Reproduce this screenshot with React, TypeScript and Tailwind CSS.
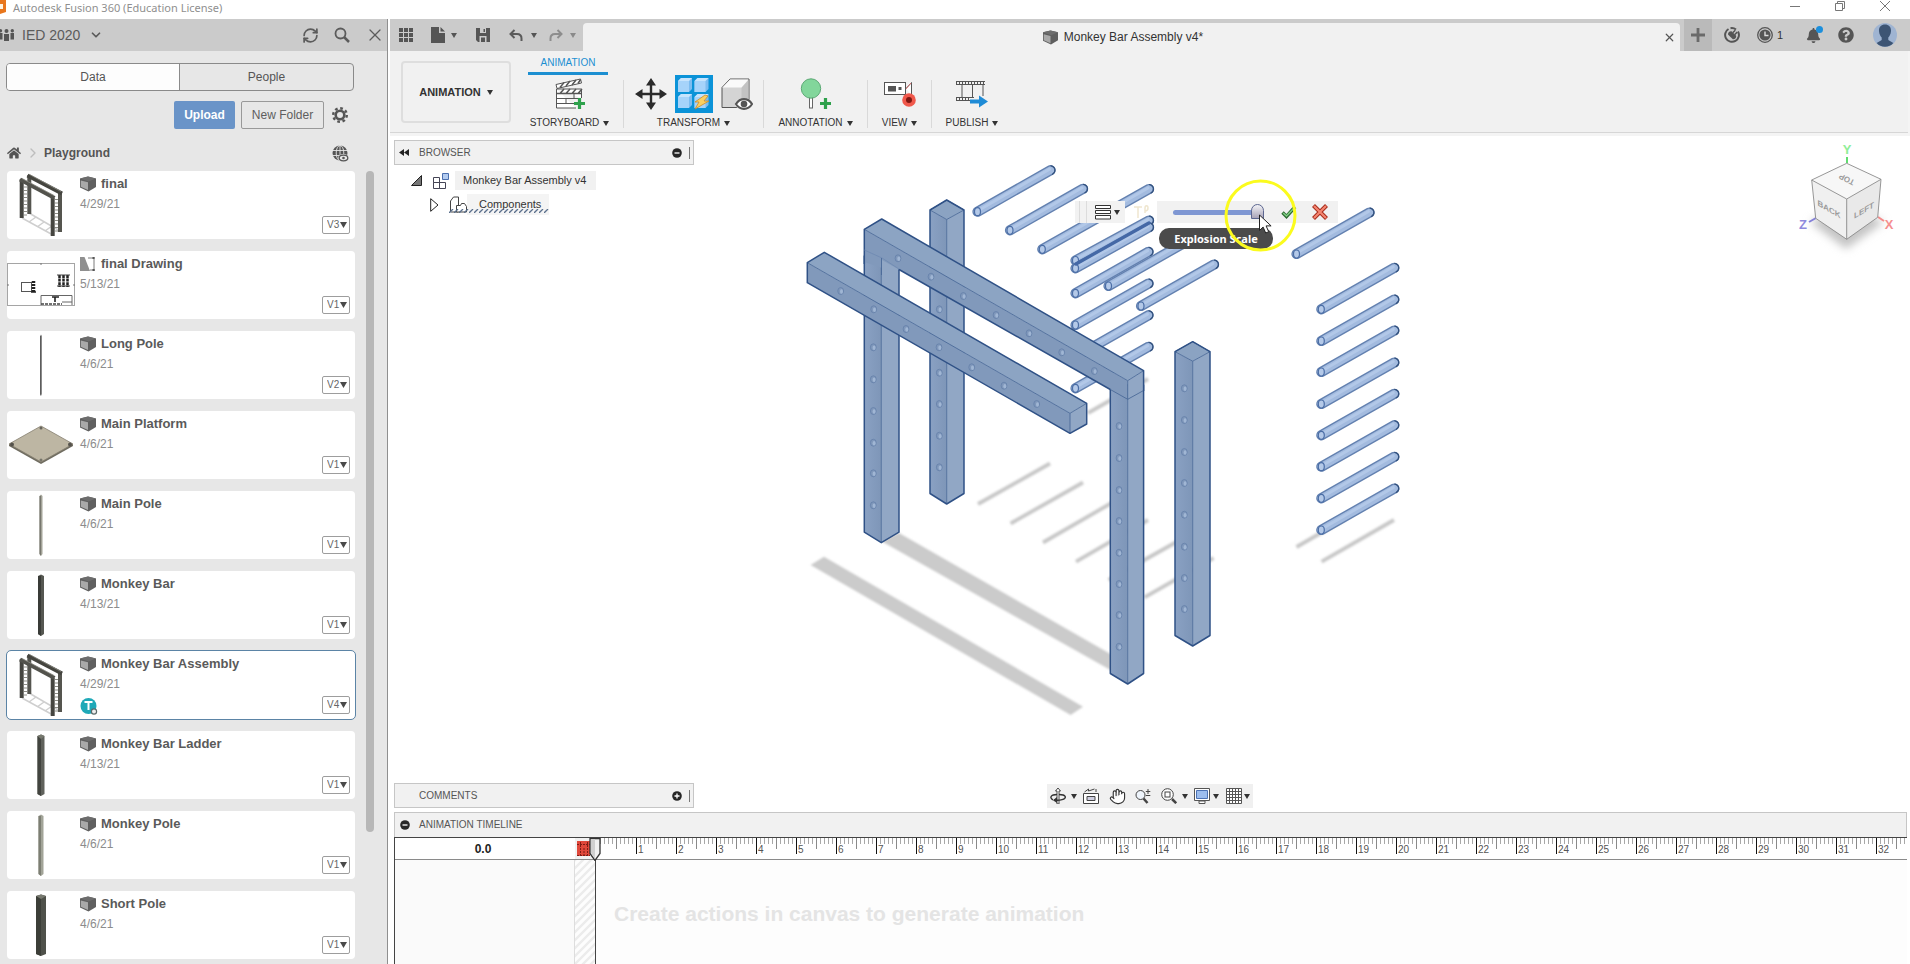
import React from "react";
import { FaHome, FaBell, FaQuestionCircle } from "react-icons/fa";
import { ChevronDown, ChevronRight, Hand, RefreshCw, X } from "lucide-react";

type Kind = "frame" | "drawing" | "pole" | "platform";
type Item = { name: string; date: string; version: string; kind: Kind; fill?: string; dark?: string; width?: number; selected?: boolean };

const items: Item[] = [
  { name: "final", date: "4/29/21", version: "V3", kind: "frame" },
  { name: "final Drawing", date: "5/13/21", version: "V1", kind: "drawing" },
  { name: "Long Pole", date: "4/6/21", version: "V2", kind: "pole", fill: "#8a8a8a", dark: "#5c5c5c", width: 2 },
  { name: "Main Platform", date: "4/6/21", version: "V1", kind: "platform" },
  { name: "Main Pole", date: "4/6/21", version: "V1", kind: "pole", fill: "#a3a398", dark: "#77776e", width: 3 },
  { name: "Monkey Bar", date: "4/13/21", version: "V1", kind: "pole", fill: "#555751", dark: "#393b37", width: 6 },
  { name: "Monkey Bar Assembly", date: "4/29/21", version: "V4", kind: "frame", selected: true },
  { name: "Monkey Bar Ladder", date: "4/13/21", version: "V1", kind: "pole", fill: "#60625c", dark: "#42443f", width: 7 },
  { name: "Monkey Pole", date: "4/6/21", version: "V1", kind: "pole", fill: "#a2a498", dark: "#7c7e73", width: 5 },
  { name: "Short Pole", date: "4/6/21", version: "V1", kind: "pole", fill: "#4f514a", dark: "#3c3e38", width: 10 },
];

function Caret({ className = "text-[#333]" }: { className?: string }) {
  return (
    <svg viewBox="0 0 6 5" className={`h-[5px] w-1.5 shrink-0 ${className}`} aria-hidden="true">
      <path d="M0 0h6L3 5z" fill="currentColor" />
    </svg>
  );
}

function CubeIcon({ className = "size-4" }: { className?: string }) {
  return (
    <svg viewBox="0 0 16 16" className={className} aria-hidden="true">
      <path d="M0 2.500 8 0.500 16 2.500V11L8.500 15.500 0 11.500z" fill="#5f5f5f" />
      <path d="M0.800 4.600 8 6.300V14L0.800 10.800z" fill="#a9a9a9" />
      <path d="M0 2.500 8 0.500 16 2.500 8.500 5.500z" fill="#6d6d6d" />
    </svg>
  );
}

function DrawingIcon() {
  return (
    <svg viewBox="0 0 16 16" className="size-4" aria-hidden="true">
      <path d="M0 1h4.500L10 15H0z" fill="#8f8f8f" />
      <path d="M8 2h6M14 1v14M10 14h5" stroke="#7a7a7a" fill="none" />
      <path d="M12.500 1h2v2h-2zM12.500 13h2v2h-2z" fill="#555" />
    </svg>
  );
}

function Thumb({ item }: { item: Item }) {
  if (item.kind === "frame")
    return (
      <svg viewBox="0 0 68 68" className="size-[68px]" aria-hidden="true">
        <path d="M15 47 46 64M22 42 53 60M22 51l7-5M30 56l7-5M38 60l7-5" stroke="#cfcfcf" strokeWidth="1.500" />
        <path d="M22.300 4V43" stroke="#55554f" strokeWidth="4" />
        <path d="M53 22V61" stroke="#55554f" strokeWidth="4" />
        <path d="M20.500 4.500 55 22.500" stroke="#45453f" strokeWidth="4" />
        <path d="M18.500 12V45M49.500 28V62" stroke="#8d8d86" strokeWidth="3" strokeDasharray="1 2.500" />
        <path d="M14.700 8V47" stroke="#454540" strokeWidth="4" />
        <path d="M45.700 27V65" stroke="#454540" strokeWidth="4" />
        <path d="M13 8.500 47.500 27" stroke="#53534d" strokeWidth="4" />
        <path d="M15 7.500 47 24.500M22 3.200 54 20.500" stroke="#8a8a81" strokeWidth="0.800" />
      </svg>
    );
  if (item.kind === "drawing")
    return (
      <svg viewBox="0 0 68 68" className="size-[68px]" aria-hidden="true">
        <rect x="0.500" y="12.500" width="67" height="42" fill="#fff" stroke="#a5a5a5" />
        <path d="M34 12v2M0 34h2M66 34h2" stroke="#777" />
        <rect x="14.500" y="31.500" width="10" height="9" fill="none" stroke="#555" />
        <path d="M26.500 30v12" stroke="#222" strokeWidth="3.500" strokeDasharray="2 1" />
        <path d="M24 41h5" stroke="#222" strokeWidth="1.500" />
        <path d="M52.500 24v12M56.500 24v12M60.500 24v12" stroke="#222" strokeWidth="2.500" strokeDasharray="3 0.600" />
        <path d="M50 24h13M50 35h13" stroke="#444" />
        <path d="M34 54V44.500h31V54" fill="none" stroke="#666" />
        <path d="M34 53h21" stroke="#444" strokeWidth="1.600" strokeDasharray="3 1" />
        <path d="M45 46h7M48 46v5" stroke="#222" strokeWidth="1.600" />
        <path d="M55 51h10" stroke="#666" />
      </svg>
    );
  if (item.kind === "platform")
    return (
      <svg viewBox="0 0 68 68" className="size-[68px]" aria-hidden="true">
        <path d="M2 33v2L34 53 66 35v-2z" fill="#6f6c60" />
        <path d="M34 15 66 33 34 51 2 33z" fill="#bdb6a3" stroke="#857f70" strokeWidth="0.800" />
        <circle cx="34" cy="17" r="1.500" fill="#66645c" />
        <circle cx="34" cy="49" r="1.500" fill="#77756a" />
        <circle cx="5" cy="33.500" r="2" fill="#55534c" />
        <circle cx="63" cy="33.500" r="2" fill="#55534c" />
      </svg>
    );
  const w = item.width ?? 4;
  return (
    <svg viewBox="0 0 68 68" className="size-[68px]" aria-hidden="true">
      <path d={`M${34 - w / 2} 5 34 3.500 ${34 + w / 2} 5V63L34 65 ${34 - w / 2} 63z`} fill={item.fill} />
      <path d={`M${34 - w / 2} 5H34V65L${34 - w / 2} 63z`} fill={item.dark} />
      {w > 6 && <path d={`M${34 - w / 2} 5 34 3.500 ${34 + w / 2} 5 34 8z`} fill="#77796f" />}
    </svg>
  );
}

function FileCard({ item }: { item: Item }) {
  return (
    <li className={`flex h-[68px] shrink-0 rounded-sm bg-white ${item.selected ? "outline outline-[#5b84a6]" : ""}`}>
      <Thumb item={item} />
      <div className="ml-[5px] flex min-w-0 flex-1 flex-col pt-1">
        <a href="#" className="flex items-center gap-[5px] text-[13px] leading-[17px] font-bold text-[#5a5a5a]">
          {item.kind === "drawing" ? <DrawingIcon /> : <CubeIcon />}
          {item.name}
        </a>
        <span className="mt-0.5 text-xs leading-5 text-[#8c8c8c]">{item.date}</span>
        {item.selected && (
          <svg viewBox="0 0 18 18" className="mt-[3px] size-[18px]" aria-label="Team hub">
            <circle cx="8.500" cy="9" r="8" fill="#1fa9b8" />
            <path d="M4.500 5h8M8.500 5v8" stroke="#fff" strokeWidth="2" />
            <circle cx="14" cy="14.500" r="2.600" fill="#eee" stroke="#5b6b6b" strokeWidth="1.200" />
          </svg>
        )}
      </div>
      <div className="relative mr-[5px] mb-[5px] flex w-7 items-center self-end rounded-xs border border-[#9d9d9d]">
        <select
          aria-label={`Version of ${item.name}`}
          className="h-4 w-full appearance-none bg-transparent pl-1 text-[10px] leading-4 text-[#666] outline-none"
        >
          <option>{item.version}</option>
        </select>
        <svg viewBox="0 0 7 6" className="pointer-events-none absolute right-0.5 h-1.5 w-[7px]" aria-hidden="true">
          <path d="M0 0h7L3.500 6z" fill="#4a4a4a" />
        </svg>
      </div>
    </li>
  );
}

function Sidebar() {
  return (
    <aside className="flex w-[388px] shrink-0 flex-col border-r border-[#8f8f8f] bg-[#e7e7e7]">
      <header className="flex h-8 shrink-0 items-center bg-[#cbcbcb] pr-0.5 text-[#5b5b5b]">
        <svg viewBox="0 0 14 14" className="h-[14px] w-[14px]" aria-hidden="true">
          <path d="M-2 5h4.500v6.500H-2zM4 6h5v7H4zM10.500 5H14v6.500h-3.500z" fill="#555" />
          <circle cx="0.500" cy="2.800" r="1.700" fill="#555" />
          <circle cx="6.500" cy="3" r="2" fill="#555" />
          <circle cx="12.300" cy="2.800" r="1.700" fill="#555" />
        </svg>
        <button className="ml-2 flex items-center gap-[9px] text-sm leading-5">
          IED 2020
          <ChevronDown size={14} strokeWidth={3} />
        </button>
        <div className="ml-auto flex items-center gap-[15px]">
          <button aria-label="Refresh"><RefreshCw size={17} strokeWidth={2.4} /></button>
          <button aria-label="Search">
            <svg viewBox="0 0 16 16" className="size-4" fill="none" stroke="currentColor">
              <circle cx="6.500" cy="6.500" r="5" strokeWidth="1.800" />
              <path d="m10 10 5 5" strokeWidth="2.500" />
            </svg>
          </button>
          <button aria-label="Close data panel"><X size={20} strokeWidth={1.5} /></button>
        </div>
      </header>

      <div className="mt-3 mr-[33px] ml-1.5 grid h-7 shrink-0 grid-cols-2 overflow-hidden rounded-sm border border-[#8a8a8a] text-xs text-[#555]">
        <button className="border-r border-[#8a8a8a] bg-[#fdfdfd]">Data</button>
        <button>People</button>
      </div>

      <div className="mt-[10px] mr-[39px] flex h-7 shrink-0 items-center justify-end text-xs">
        <button className="h-7 w-[61px] rounded-xs bg-[#6a94c8] font-bold text-white">Upload</button>
        <button className="ml-1.5 h-7 w-[83px] rounded-xs border border-[#999] text-[#5e5e5e]">New Folder</button>
        <button aria-label="Settings" className="ml-2 text-[#555]">
          <svg viewBox="0 0 16 16" className="size-4" fill="none" stroke="#555">
            <circle cx="8" cy="8" r="6.800" strokeWidth="2.400" strokeDasharray="2.700 2.640" />
            <circle cx="8" cy="8" r="4.300" strokeWidth="2.600" />
          </svg>
        </button>
      </div>

      <nav className="mt-[14px] mr-[38px] ml-[7px] flex h-5 shrink-0 items-center text-[#555]">
        <a href="#" aria-label="Home"><FaHome size={14} /></a>
        <ChevronRight size={16} strokeWidth={2} className="ml-1 text-[#bdbdbd]" />
        <a href="#" className="ml-[3px] text-xs leading-4 font-bold">Playground</a>
        <button aria-label="Open on the web" className="ml-auto">
          <svg viewBox="0 0 17 17" className="size-[17px]" aria-hidden="true">
            <circle cx="8" cy="8" r="7.500" fill="#555" />
            <path d="M0 5.500h16M0 10.500h16M8 0v16" stroke="#e7e7e7" strokeWidth="0.900" />
            <ellipse cx="8" cy="8" rx="3.800" ry="7.500" fill="none" stroke="#e7e7e7" strokeWidth="0.900" />
            <ellipse cx="11.500" cy="13" rx="5.500" ry="4" fill="#e7e7e7" />
            <ellipse cx="11.500" cy="13" rx="4.300" ry="2.800" fill="none" stroke="#555" strokeWidth="1.300" />
            <circle cx="11.500" cy="13" r="1.300" fill="#555" />
          </svg>
        </button>
      </nav>

      <div className="mt-2 flex min-h-0 flex-1 pl-[7px]">
        <ul className="-ml-1 flex min-h-0 flex-1 flex-col gap-3 overflow-hidden pt-0 pr-1 pl-1">
          {items.map((item) => (
            <FileCard key={item.name} item={item} />
          ))}
        </ul>
        <div className="mr-[13px] ml-[7px] w-2 shrink-0">
          <div className="h-5/6 w-2 rounded-full bg-[#b7b7b7]" />
        </div>
      </div>
    </aside>
  );
}

function QuickBar() {
  return (
    <div className="flex h-8 shrink-0 bg-[#cbcbcb] pr-0.5">
      <div className="flex w-[193px] shrink-0 items-center pl-[9px]">
        <button aria-label="Data panel">
          <svg viewBox="0 0 14 14" className="size-[14px]" fill="#555">
            <path d="M0 0h4v4H0zM5 0h4v4H5zM10 0h4v4h-4zM0 5h4v4H0zM5 5h4v4H5zM10 5h4v4h-4zM0 10h4v4H0zM5 10h4v4H5zM10 10h4v4h-4z" />
          </svg>
        </button>
        <button aria-label="File" className="ml-[18px] flex items-center gap-1.5">
          <svg viewBox="0 0 14 16" className="h-4 w-[14px]" fill="#555"><path d="M0 0h8v6h6v10H0z" /><path d="M9.500 0 14 4.500H9.500z" /></svg>
          <Caret className="text-[#555]" />
        </button>
        <button aria-label="Save" className="ml-[19px]">
          <svg viewBox="0 0 14 14" className="size-[14px]">
            <path d="M0 0h14v14H2l-2-2z" fill="#555" />
            <path d="M4 0h6v5H4zM3.500 8h7v6h-7z" fill="#cbcbcb" />
            <path d="M7.500 1h1.500v3H7.500zM5 9.500h4V14H5z" fill="#555" />
          </svg>
        </button>
        <button aria-label="Undo" className="ml-[19px] flex items-center gap-2">
          <svg viewBox="0 0 14 13" className="h-[13px] w-[14px]" fill="none" stroke="#5b5b5b" strokeWidth="2">
            <path d="M5.500 1 1.500 5l4 4M1.500 5H8c3 0 4.500 2 4.500 4.500V12" />
          </svg>
          <Caret className="text-[#555]" />
        </button>
        <button aria-label="Redo" className="ml-3 flex items-center gap-[7px] opacity-55">
          <svg viewBox="0 0 14 13" className="h-[13px] w-[14px]" fill="none" stroke="#5b5b5b" strokeWidth="2">
            <path d="M8.500 1l4 4-4 4M12.500 5H6C3 5 1.500 7 1.500 9.500V12" />
          </svg>
          <Caret className="text-[#555]" />
        </button>
      </div>
      <div className="mt-1 flex flex-1 items-center justify-center rounded-t-sm bg-[#f1f1f1]">
        <div className="ml-auto flex items-center gap-1.5 text-xs leading-4 text-[#333]">
          <CubeIcon className="size-[15px]" />
          Monkey Bar Assembly v4*
        </div>
        <button aria-label="Close tab" className="mr-1 ml-auto text-[#555]"><X size={13} strokeWidth={2.2} /></button>
      </div>
      <button aria-label="New tab" className="ml-1 flex w-7 items-center justify-center bg-[#bababa]">
        <svg viewBox="0 0 14 14" className="size-[14px]"><path d="M7 0v14M0 7h14" stroke="#6a6a6a" strokeWidth="2.800" /></svg>
      </button>
      <div className="flex items-center pr-[11px] pl-3 text-[#555]">
        <button aria-label="Extensions">
          <svg viewBox="0 0 16 16" className="size-4" fill="none" stroke="#555">
            <path d="M4.500 2A6.900 6.900 0 1 0 14 4.500" strokeWidth="2" />
            <path d="M6.500 1.200A6.900 6.900 0 0 1 12 2.500" strokeWidth="2" />
            <path d="m4 7.500 4.800 4.800c2.200.2 3.600-1.400 3.400-3.600L7.500 4.200C5.300 4 3.800 5.500 4 7.500z" fill="#555" stroke="none" />
            <path d="m8.700 5.800 2.600-2.600M10.600 7.700l2.600-2.600" strokeWidth="1.500" />
          </svg>
        </button>
        <button aria-label="Job status" className="ml-[17px] flex items-center gap-1 text-[11px] leading-4 text-[#333]">
          <svg viewBox="0 0 16 16" className="size-4" fill="none">
            <circle cx="8" cy="8" r="7.300" stroke="#555" strokeWidth="1.300" />
            <circle cx="8" cy="8" r="5.600" fill="#555" />
            <path d="M8 4.500V8.500h3.500" stroke="#ddd" strokeWidth="1.400" />
          </svg>
          1
        </button>
        <button aria-label="Notifications" className="ml-[23px]">
          <span className="relative block">
            <FaBell size={15} />
            <span className="absolute -top-0.5 -right-0.5 size-[7px] rounded-full bg-[#1c8fdc]" />
          </span>
        </button>
        <button aria-label="Help" className="ml-[17px]"><FaQuestionCircle size={16} /></button>
        <button aria-label="Account" className="ml-[19px]">
          <svg viewBox="0 0 24 24" className="size-6">
            <circle cx="12" cy="12" r="12" fill="#9fb4d2" />
            <path d="M12 1.500c4 0 6.300 2.800 6 6.800-.3 3.200-1.500 5-2.700 6.200v2.500l5 3c-4 5-12.600 5-16.600 0l5-3v-2.500C7.500 13.300 6.300 11.500 6 8.300c-.3-4 2-6.800 6-6.800z" fill="#3d5574" />
          </svg>
        </button>
      </div>
    </div>
  );
}

function Group({ label, width, children, last }: { label: string; width: string; children: React.ReactNode; last?: boolean }) {
  return (
    <div className="flex">
      <div className={`flex flex-col items-center ${width}`}>
        <div className="flex h-[38px] items-center justify-center gap-2">{children}</div>
        <button className="mt-0.5 flex items-center gap-1 text-[10px] leading-4 text-[#333]">
          {label}
          <Caret />
        </button>
      </div>
      {!last && <div className="mt-[5px] h-12 w-px bg-[#d9d9d9]" />}
    </div>
  );
}

const plus = <path d="M25.500 20v11M20 25.500h11" stroke="#2ea14c" strokeWidth="3.200" />;

function Ribbon() {
  return (
    <div className="flex h-[85px] shrink-0 flex-col bg-[#f4f4f4] pr-0.5">
      <div className="flex h-[82px] border-b border-[#d6d6d6] bg-[#f1f1f1]">
        <button className="mt-2.5 ml-[11px] flex h-[62px] w-[110px] shrink-0 items-center justify-center gap-1.5 rounded-sm border-2 border-[#dedede] text-[11px] font-bold text-[#333]">
          ANIMATION
          <Caret />
        </button>
        <div className="ml-[5px] flex flex-col">
          <a href="#" className="ml-3 flex h-6 w-20 items-start justify-center border-b-3 border-[#1c8fd1] pt-1 text-[10px] leading-4 text-[#1c8fd1]">
            ANIMATION
          </a>
          <div className="flex">
            <Group label="STORYBOARD" width="w-[107px]">
              <button aria-label="New storyboard">
                <svg viewBox="0 0 32 32" className="size-8" fill="none" stroke="#555">
                  <path d="M2 6.500 26.500 1l1 4L3 10.500z" fill="#fff" />
                  <path d="m6 9.500 4-5M12 8l4-5M18 7l4-5M24 5.500l2.500-4" strokeWidth="1.500" />
                  <path d="M2.500 11v19H22M27.500 20v-9h-25" fill="#fff" />
                  <path d="M2.500 15.500h25M6 15.500l4-4.500M12 15.500l4-4.500M18 15.500l4-4.500M24 15.500l4-4.500" strokeWidth="1.500" />
                  <path d="M3 20.500h22M3 25.500h17M12 20.500v5M20 16v4.500" />
                  {plus}
                </svg>
              </button>
            </Group>
            <Group label="TRANSFORM" width="w-[139px]">
              <button aria-label="Transform components">
                <svg viewBox="0 0 32 32" className="size-8" fill="#2b2b2b">
                  <path d="M16 5v22M5 16h22" stroke="#2b2b2b" strokeWidth="2.400" />
                  <path d="m16 0 5 7.500H11zM16 32l5-7.500H11zM0 16l7.500-5v10zM32 16l-7.500-5v10z" />
                </svg>
              </button>
              <button aria-label="Auto explode" className="flex size-[38px] items-center justify-center bg-[#0b93d8]">
                <svg viewBox="0 0 38 38" className="size-[38px]">
                  {[[3, 3], [19.5, 3], [3, 19], [19.5, 19]].map(([x, y]) => (
                    <g key={`${x}-${y}`}>
                      <path d={`M${x} ${y + 3}l3-3h11v11l-3 3h-11z`} fill="#7cbcf0" />
                      <path d={`M${x} ${y + 3}h11v11h-11z`} fill="#a6d3fa" />
                      <path d={`M${x} ${y + 3}l3-3h11l-3 3z`} fill="#c7e4fd" />
                    </g>
                  ))}
                  <path d="M30 20l-10 7h4l-4 7 14-8h-5l4-5z" fill="#fcd061" stroke="#c98a2c" strokeWidth="0.800" />
                </svg>
              </button>
              <button aria-label="Show or hide">
                <svg viewBox="0 0 32 32" className="size-8">
                  <path d="M1 9.500 9 1h19v21l-8 7.500H1z" fill="#d4d4d4" stroke="#555" />
                  <path d="M1.500 9.500 9 1.500h18.500L20.500 9.500z" fill="#fafafa" />
                  <path d="M20.500 10 27.500 2v20l-7 7z" fill="#c2c2c2" />
                  <ellipse cx="23" cy="26" rx="9" ry="6" fill="#f1f1f1" />
                  <path d="M15 26c4-6.500 12-6.500 16 0-4 6.500-12 6.500-16 0z" fill="#fff" stroke="#555" strokeWidth="2.200" />
                  <circle cx="23" cy="26" r="3.300" fill="#555" />
                </svg>
              </button>
            </Group>
            <Group label="ANNOTATION" width="w-[103px]">
              <button aria-label="Create callout">
                <svg viewBox="0 0 32 32" className="size-8">
                  <rect x="9.500" y="19" width="3" height="11" fill="#fff" stroke="#666" />
                  <circle cx="11" cy="10.500" r="9.700" fill="#82d69b" stroke="#5ba874" />
                  {plus}
                </svg>
              </button>
            </Group>
            <Group label="VIEW" width="w-[63px]">
              <button aria-label="Record view">
                <svg viewBox="0 0 32 32" className="size-8">
                  <rect x="0.500" y="4.500" width="21" height="12" fill="#fff" stroke="#555" />
                  <path d="M4 8h8v5.500H4zM14.500 9h3v3h-3z" fill="#555" />
                  <path d="M22 10.500 27.500 4.500V17" fill="#fff" stroke="#555" />
                  <path d="m22 11 5-6" stroke="#d77" />
                  <circle cx="25" cy="22" r="6.800" fill="#f0584b" />
                  <circle cx="25" cy="22" r="3" fill="#7d1711" />
                </svg>
              </button>
            </Group>
            <Group label="PUBLISH" width="w-[80px]" last>
              <button aria-label="Publish video">
                <svg viewBox="0 0 32 32" className="size-8" fill="none">
                  <path d="M0 3.500h29M0 6.500h29M0 19.500h18M0 22.500h14" stroke="#555" />
                  <path d="M0 5h29M0 21h14" stroke="#555" strokeWidth="3" strokeDasharray="1 2" />
                  <path d="M6 6v13.500h10M16.500 6v13.500M27 6v12" stroke="#555" />
                  <path d="M14 21.500h9v-4l9 6-9 6v-4h-9z" fill="#1f8bd6" />
                </svg>
              </button>
            </Group>
          </div>
        </div>
      </div>
    </div>
  );
}

const RodShape = ({ x, y, dx = 73, dy = -41.5 }: { x: number; y: number; dx?: number; dy?: number }) => (
  <g strokeLinecap="round" fill="none">
    <path d={`M${x} ${y}l${dx} ${dy}`} stroke="#6381b0" strokeWidth="10.200" />
    <path d={`M${x} ${y}l${dx} ${dy}`} stroke="#a3bbdf" strokeWidth="7.400" />
    <path d={`M${x + 2} ${y - 2}l${dx - 3} ${dy + 1}`} stroke="#b2c8e8" strokeWidth="3" />
    <ellipse cx={x} cy={y} rx="3" ry="4" fill="#b4c9e8" stroke="#4b6ea6" strokeWidth="1.200" />
    <path d={`M${x + dx + 0.5} ${y + dy - 4.400}c5 1 5 6.500 1.500 8.400`} stroke="#33527f" strokeWidth="1.300" />
  </g>
);

const freeRods: [number, number][] = [
  [977.5, 211.7], [1010, 230.3], [1075.5, 293.3], [1075.5, 325], [1075.5, 356.7], [1075.5, 388.3],
  [1108.5, 286], [1141, 306], [1296.5, 254],
];
const ladderRods = [309.3, 341, 372, 404, 435.3, 466.7, 498.3, 530];

const sideHoles: [number, number][] = [
  ...[347.3, 379.3, 411, 442.7, 473.3, 505.3].map((y) => [873.3, y] as [number, number]),
  ...[309.3, 372.7, 404, 435.7, 467.3].map((y) => [939.3, y] as [number, number]),
];
const upperHoles: [number, number][] = [[898, 258.3], [931, 276.7], [963.3, 296], [996, 315], [1029, 333.3], [1061.7, 352.3], [1094.3, 371]];
const lowerHoles: [number, number][] = [[840.7, 291], [873.7, 309.3], [906, 329], [939, 347.3], [971.7, 367.3], [1004, 385.7], [1036.7, 404]];
const frontHoles: [number, number][] = [426, 458, 490, 521, 552.7, 584, 615, 646.7].map((y) => [1119, y]);
const backHoles: [number, number][] = [388.3, 420, 452, 483, 514.7, 546.7, 578, 609].map((y) => [1184.3, y]);

function Holes({ at }: { at: [number, number][] }) {
  return (
    <g>
      {at.map(([x, y]) => (
        <g key={`${x}-${y}`}>
          <ellipse cx={x} cy={y} rx="2.900" ry="3.500" fill="#7f97ba" stroke="#6480aa" strokeWidth="0.800" />
          <ellipse cx={x + 0.8} cy={y + 0.5} rx="1.500" ry="2.300" fill="#a0b6d4" />
        </g>
      ))}
    </g>
  );
}

const outline = { stroke: "#2f5186", strokeWidth: 1.5, strokeLinejoin: "round" as const, fill: "none" };
const seam = { stroke: "#4b6a98", strokeWidth: 0.9, fill: "none" };

function Post({ l, m, r, top, bottom, capped }: { l: number; m: number; r: number; top: number; bottom: number; capped?: boolean }) {
  const t = capped ? top + 10 : top;
  const inner = capped ? top + 19.5 : top;
  return (
    <g>
      <path d={`M${l} ${t}L${m} ${inner}V${bottom}L${l} ${bottom - 10.5}z`} fill="url(#side)" />
      <path d={`M${r} ${t}L${m} ${inner}V${bottom}L${r} ${bottom - 10.5}z`} fill="#91a7c5" />
      {capped && <path d={`M${l} ${t}L${m} ${top}L${r} ${t}L${m} ${inner}z`} fill="#8ba3c2" stroke="#4b6a98" strokeWidth="0.900" />}
      <path d={`M${m} ${inner}V${bottom}`} {...seam} />
      <path d={`M${l} ${t}${capped ? `L${m} ${top}` : `H${m}`}L${r} ${t}V${bottom - 10.5}L${m} ${bottom}L${l} ${bottom - 10.5}z`} {...outline} />
    </g>
  );
}

function Model() {
  return (
    <svg viewBox="780 140 640 600" className="absolute top-1 left-[390px] h-[600px] w-[640px]" role="img" aria-label="Exploded monkey bar assembly">
      <defs>
        <linearGradient id="side" x1="0" x2="1" y1="0" y2="0">
          <stop offset="0" stopColor="#8aa1c3" />
          <stop offset="1" stopColor="#7e96b8" />
        </linearGradient>
        <filter id="soft" x="-5%" y="-5%" width="110%" height="110%"><feGaussianBlur stdDeviation="1" /></filter>
      </defs>
      <g filter="url(#soft)">
        <path d="M810.600 565 824 556.700 1083 706.700 1070.600 715zM881 541 899 533 1114 656V672z" fill="#cbcbcb" />
        <path
          d="M978 504 1050 463.500M1010.600 523.500 1083 482.500M1043 542.500 1115 501M1076 561.700 1148 520M1108.600 580 1180 540M1144.500 597.300 1213.500 558M1296.500 547 1345 519M1321.600 561.700 1394 520M1088 413 1148 379"
          stroke="#c8c8c8" strokeWidth="3.800" fill="none"
        />
      </g>
      <Post l={930} m={946.7} r={964} top={200} bottom={504} capped />
      <RodShape x={1042.300} y={249.300} dx={106.700} dy={-60.300} />
      <RodShape x={1075.500} y={260.500} dx={73.500} dy={-40} />
      <RodShape x={1075.500} y={268.300} dx={73.500} dy={-41} />
      <path d="m1076 264 73-41" stroke="#4468a6" strokeWidth="3.200" strokeLinecap="round" />
      {freeRods.map(([x, y]) => <RodShape key={`${x}-${y}`} x={x} y={y} />)}
      {ladderRods.map((y) => <RodShape key={y} x={1321.300} y={y} />)}
      <Post l={1175} m={1192.700} r={1210} top={341.700} bottom={646} capped />
      <Post l={864.300} m={881.300} r={899} top={256} bottom={542.700} />
      <Holes at={sideHoles} />
      <Post l={1110.300} m={1127.700} r={1143.600} top={385} bottom={684} />
      <path d="M864.300 229.300 1127.700 380.700V399.300L882 260V268L864.300 262z" fill="#8199bb" />
      <path d="M881.700 219 1143.600 370.700 1127.700 380.700 864.300 229.300z" fill="#8ca4c3" />
      <path d="M1127.700 380.700 1143.600 370.700V390.500L1127.700 399.300z" fill="#91a7c5" />
      <path d="M864.300 229.300 1127.700 380.700 1143.600 370.700M1127.700 380.700V399.300M1110.300 389.500 1127.700 399.300 1143.600 390.500" {...seam} />
      <path d="M864.300 264V229.300L881.700 219 1143.600 370.700V391M899 269.500 1110.300 389.500" {...outline} />
      <path d="M864.300 250 882 258 899 269" stroke="#6b86b0" strokeWidth="0.700" fill="none" />
      <path d="M881.500 258V275" {...seam} />
      <path d="M807.300 262.700 1070 413.300V433.300L807.300 282.700z" fill="#8199bb" />
      <path d="M824.300 252.300 1086.700 403.300 1070 413.300 807.300 262.700z" fill="#8ca4c3" />
      <path d="M1070 413.300 1086.700 403.300V424L1070 433.300z" fill="#91a7c5" />
      <path d="M807.300 262.700 1070 413.300 1086.700 403.300M1070 413.300V433.300" {...seam} />
      <path d="M807.300 262.700 824.300 252.300 1086.700 403.300V424L1070 433.300 807.300 282.700z" {...outline} />
      <Holes at={upperHoles} />
      <Holes at={lowerHoles} />
      <Holes at={frontHoles} />
      <Holes at={backHoles} />
    </svg>
  );
}

function ViewCube() {
  return (
    <svg viewBox="1790 136 118 124" className="absolute top-0 right-0.5 h-[124px] w-[118px] font-['Liberation_Sans',sans-serif]" role="img" aria-label="View cube">
      <defs>
        <filter id="cubeShadow" x="-30%" y="-60%" width="160%" height="220%"><feGaussianBlur stdDeviation="4" /></filter>
      </defs>
      <path d="M1810 222 1846 249 1884 222 1847 205z" fill="#c4c4c4" filter="url(#cubeShadow)" />
      <path d="M1847 163v-6" stroke="#5fdc6f" strokeWidth="2" />
      <path d="M1816 218l-7 4" stroke="#8480d8" strokeWidth="2" />
      <path d="M1878 217l6 4" stroke="#f58a8a" strokeWidth="2" />
      <path d="M1811.700 180 1846.700 199V239.300L1815.700 218.300z" fill="#f0f0f0" />
      <path d="M1881 179.300 1846.700 199V239.300L1877.700 217.300z" fill="#e9e9e9" />
      <path d="M1846.700 163.300 1881 179.300 1846.700 199 1811.700 180z" fill="#f7f7f7" />
      <path d="M1811.700 180 1846.700 163.300 1881 179.300 1877.700 217.300 1846.700 239.300 1815.700 218.300zM1811.700 180 1846.700 199 1881 179.300M1846.700 199V239.300" fill="none" stroke="#8b8b8b" strokeWidth="0.900" />
      <g fontSize="8" fontWeight="700" fill="#9a9a9a" textAnchor="middle">
        <text transform="translate(1829 212) skewY(30)">BACK</text>
        <text transform="translate(1864 213) skewY(-30)">LEFT</text>
        <text transform="translate(1848 177) rotate(208)">TOP</text>
      </g>
      <g fontSize="13" fontWeight="700" textAnchor="middle">
        <text x="1847" y="154" fill="#8fee98">Y</text>
        <text x="1803" y="229" fill="#8f8bdd">Z</text>
        <text x="1889" y="229" fill="#f58f8f">X</text>
      </g>
    </svg>
  );
}

function ExplodeToolbar() {
  return (
    <div className="absolute top-[65px] left-[685px] flex h-[22px] w-[263px] items-center">
      <div className="flex h-full w-[50px] items-center bg-[#f2f2f2]">
        <span className="ml-1 h-full w-px bg-[#dcdcdc]" />
        <span className="ml-1.5 h-full w-px bg-[#dcdcdc]" />
        <button aria-label="Explosion type" className="ml-2 flex items-center gap-[3px]">
          <svg viewBox="0 0 16 15" className="h-[15px] w-4" fill="#fff" stroke="#333">
            <path d="M.5.5h15v3H.5zM.5 5.500h15v3H.5zM.5 10.500h15v3.500H.5z" />
          </svg>
          <Caret />
        </button>
      </div>
      <button aria-label="Trail line visibility" className="flex w-8 justify-center">
        <svg viewBox="0 0 16 16" className="size-4" fill="none" stroke="#efe6cf" strokeWidth="1.500">
          <path d="M1 3h8M5 3v11M12 9V4c0-3 3-3 3 0 0 2-1 3-3 3" />
        </svg>
      </button>
      <div className="flex h-full flex-1 items-center bg-[#f1f1f1] pl-4">
        <input
          type="range"
          aria-label="Explosion Scale"
          defaultValue={100}
          className="h-[18px] w-[91px] appearance-none bg-transparent [&::-webkit-slider-runnable-track]:h-[5px] [&::-webkit-slider-runnable-track]:rounded-full [&::-webkit-slider-runnable-track]:bg-[#7f97d3] [&::-webkit-slider-thumb]:-mt-[6px] [&::-webkit-slider-thumb]:h-[15px] [&::-webkit-slider-thumb]:w-[13px] [&::-webkit-slider-thumb]:appearance-none [&::-webkit-slider-thumb]:rounded-t-full [&::-webkit-slider-thumb]:rounded-b-sm [&::-webkit-slider-thumb]:border [&::-webkit-slider-thumb]:border-[#5c6690] [&::-webkit-slider-thumb]:bg-linear-to-b [&::-webkit-slider-thumb]:from-[#f3f3f6] [&::-webkit-slider-thumb]:to-[#a9a4b8]"
        />
        <button aria-label="OK" className="ml-[17px]">
          <svg viewBox="0 0 16 16" className="size-4" fill="none">
            <path d="M1.500 8.500 5.500 12.500 14 3" stroke="#2c6b31" strokeWidth="3.400" />
            <path d="M2.200 9 5.500 12 13.300 3.800" stroke="#7fce84" strokeWidth="1.500" />
          </svg>
        </button>
        <button aria-label="Cancel" className="ml-[15px]">
          <svg viewBox="0 0 16 16" className="size-4" fill="none">
            <path d="m1.500 1.500 13 13M14.500 1.500l-13 13" stroke="#a62a1a" strokeWidth="4.200" />
            <path d="m2 2 12 12M14 2 2 14" stroke="#f58671" strokeWidth="2.200" />
          </svg>
        </button>
      </div>
    </div>
  );
}

function Pointer() {
  return (
    <svg viewBox="0 0 76 76" className="pointer-events-none absolute top-[42px] left-[832px] size-[76px]" aria-hidden="true">
      <circle cx="38.500" cy="37.500" r="34.500" fill="none" stroke="#fbfb1e" strokeWidth="3" />
      <path d="M37.500 37v15.500l3.600-3.500 2.600 6 3-1.300-2.600-5.800h5z" fill="#fff" stroke="#222" />
    </svg>
  );
}

function SignIcon({ sign }: { sign: "+" | "-" }) {
  return (
    <svg viewBox="0 0 10 10" className="size-2.5">
      <circle cx="5" cy="5" r="4.800" fill="#262626" />
      <path d={sign === "+" ? "M2.500 5h5M5 2.500v5" : "M2.500 5h5"} stroke="#fff" strokeWidth="1.300" />
    </svg>
  );
}

function PanelHeader({ label, sign, arrows }: { label: string; sign: "+" | "-"; arrows?: boolean }) {
  return (
    <div className="flex h-[25px] w-[300px] items-center border border-[#c6c6c6] bg-[#f1f1f1] text-[10px] leading-4 text-[#555]">
      <div className="flex w-6 items-center pl-1">
        {arrows && (
          <svg viewBox="0 0 10 7" className="h-[7px] w-2.5"><path d="M5 0v7L0 3.500zM10 0v7L5 3.500z" fill="#222" /></svg>
        )}
      </div>
      <span>{label}</span>
      <button aria-label={`Toggle ${label}`} className="ml-auto"><SignIcon sign={sign} /></button>
      <span className="mr-px ml-[7px] h-3 w-[3px] border-l border-[#777]" />
    </div>
  );
}

function BrowserTree() {
  return (
    <div className="mt-1.5 flex flex-col items-start text-[11px] text-[#333]">
      <div className="ml-[17px] flex h-[19px] items-center">
        <svg viewBox="0 0 11 11" className="size-[11px]"><path d="M10.500.5v10H.5z" fill="#777" stroke="#222" /></svg>
        <svg viewBox="0 0 16 16" className="ml-[11px] size-4" fill="#fff" stroke="#445">
          <path d="M.5 4.500h6v5h-6zM.5 9.500h6v6h-6zM6.500 9.500h6v6h-6z" />
          <path d="M9.500.5h6v6h-6z" fill="#b4ccf0" stroke="#4b6fae" />
        </svg>
        <span className="ml-1.5 flex h-[19px] items-center bg-[#f1f1f1] pr-[9px] pl-2">Monkey Bar Assembly v4</span>
      </div>
      <div className="mt-1 ml-9 flex h-[21px] items-center">
        <svg viewBox="0 0 9 14" className="h-[14px] w-[9px]"><path d="M.7.7 8 7 .7 13.300z" fill="#fff" stroke="#222" /></svg>
        <div className="relative ml-2.5 flex h-[21px] items-center">
          <svg viewBox="0 0 18 17" className="h-[17px] w-[18px]" fill="#fff" stroke="#444">
            <path d="M1.500 16V5l3-4h5v15z" />
            <path d="M7.500 16V9.500h4l1-2h3l2 3V16z" />
          </svg>
          <span className="flex h-[21px] items-center bg-[#f4f4f4] pr-2 pl-3">Components</span>
          <svg className="absolute bottom-0.5 left-0 h-1 w-full" aria-hidden="true">
            <defs>
              <pattern id="hatchLine" width="5" height="4" patternUnits="userSpaceOnUse"><path d="M0 4 4 0" stroke="#5a6f8c" strokeWidth="1.300" /></pattern>
            </defs>
            <rect width="100%" height="4" fill="url(#hatchLine)" />
          </svg>
        </div>
      </div>
    </div>
  );
}

function NavBar() {
  return (
    <div className="absolute bottom-1 left-1/2 flex h-6 w-[206px] -translate-x-1/2 items-center bg-[#f0f0f0] pl-[3px] text-[#333]">
      <button aria-label="Orbit" className="flex items-center gap-[5px]">
        <svg viewBox="0 0 16 16" className="size-4" fill="none" stroke="#333">
          <path d="M7 16V3H5.500L8 0l2.500 3H9v13z" fill="#fff" strokeWidth="0.900" />
          <path d="M3 12C-1 9.500 1 6.500 7 6.500M9 6.500c7 0 8.500 3.500 3 5.200-2 .6-5 .8-8 .3" strokeWidth="1.400" />
          <path d="M3 12.200 7 9v6z" fill="#333" stroke="none" />
        </svg>
        <Caret />
      </button>
      <button aria-label="Look at" className="ml-1.5">
        <svg viewBox="0 0 16 16" className="size-4" fill="none" stroke="#444">
          <path d="M.5 5.500h15v10H.5z" fill="#fff" />
          <path d="M4 8.500h8v4H4z" fill="#cfcfe0" />
          <path d="m1.500 4 4-3v2l6-2M13 1v3" />
        </svg>
      </button>
      <button aria-label="Pan" className="ml-2.5"><Hand size={17} strokeWidth={1.6} fill="#fff" /></button>
      <button aria-label="Zoom" className="ml-[9px]">
        <svg viewBox="0 0 16 16" className="size-4" fill="none" stroke="#444">
          <circle cx="5.500" cy="7" r="4.500" fill="#eef4fb" />
          <path d="m8.500 10.500 4 4.500" strokeWidth="2.500" />
          <path d="M13 1v5M10.800 3.500h4.500M10.800 7.500h4.500" />
        </svg>
      </button>
      <button aria-label="Fit" className="ml-2.5 flex items-center gap-[5px]">
        <svg viewBox="0 0 16 16" className="size-4" fill="none" stroke="#444">
          <circle cx="6.500" cy="6.500" r="5.800" fill="#fff" />
          <rect x="4" y="4" width="5" height="5" />
          <path d="m11 11 4.200 4.200" strokeWidth="2.500" />
        </svg>
        <Caret />
      </button>
      <button aria-label="Display settings" className="ml-1.5 flex items-center gap-[3px]">
        <svg viewBox="0 0 16 16" className="size-4" fill="#fff" stroke="#555">
          <path d="M.5.5h15v12H.5zM5 13h6v2.500H5z" />
          <path d="M2.500 2.500h11v8h-11z" fill="#9cbdee" stroke="#4c72b4" />
        </svg>
        <Caret />
      </button>
      <button aria-label="Grid and snaps" className="ml-[7px] flex items-center gap-0.5">
        <svg viewBox="0 0 16 16" className="size-4" fill="#fff" stroke="#555">
          <path d="M.5.5h15v15H.5zM3.500 0v16M6.500 0v16M9.500 0v16M12.500 0v16M0 3.500h16M0 6.500h16M0 9.500h16M0 12.500h16" />
        </svg>
        <Caret />
      </button>
    </div>
  );
}

function Ruler() {
  const seconds = Array.from({ length: 33 }, (_, i) => i);
  return (
    <div className="relative min-w-0 flex-1">
      <svg className="absolute inset-0 h-full w-full" aria-hidden="true">
        <defs>
          <pattern id="ticks" x="1" width="40" height="22" patternUnits="userSpaceOnUse">
            <path d="M4.500 0v6M8.500 0v6M12.500 0v6M16.500 0v6M24.500 0v6M28.500 0v6M32.500 0v6M36.500 0v6" stroke="#a8a8a8" />
            <path d="M20.500 0v11" stroke="#8a8a8a" />
            <path d="M0.500 0v16" stroke="#111" />
          </pattern>
        </defs>
        <rect width="100%" height="22" fill="url(#ticks)" />
      </svg>
      <ol className="relative flex overflow-hidden text-[10px] leading-4 text-[#555]">
        {seconds.map((s) => (
          <li key={s} className="w-10 shrink-0 pt-1 pl-[3px]">{s > 0 ? s : ""}</li>
        ))}
      </ol>
      <svg viewBox="0 0 28 23" className="absolute top-0 -left-[19px] h-[23px] w-7" aria-label="Playhead">
        <path d="M1 3h13v15H1z" fill="#e0473a" />
        <path d="M1 6.500h13M1 17.500h13M4.500 4v14M8 10v8M11.500 4v14" stroke="#7d1c15" strokeDasharray="2 1" />
        <path d="M14 .5h10v15l-5 7-5-7z" fill="#f0f0f0" stroke="#333" strokeWidth="1.300" />
        <path d="M15 1h4v20l-4-6z" fill="#cfcfcf" />
      </svg>
    </div>
  );
}

function Timeline() {
  return (
    <section className="mr-[3px] ml-1 flex h-[152px] shrink-0 flex-col">
      <header className="flex h-[25px] shrink-0 items-center border border-b-0 border-[#c6c6c6] bg-[#f1f1f1] pl-[5px] text-[10px] leading-4 text-[#555]">
        <button aria-label="Collapse timeline"><SignIcon sign="-" /></button>
        <h2 className="ml-[9px]">ANIMATION TIMELINE</h2>
      </header>
      <div className="flex min-h-0 flex-1 flex-col border-t border-l border-[#444]">
        <div className="flex h-[22px] shrink-0 border-b border-[#8a8a8a] bg-white">
          <div className="flex w-[180px] shrink-0 items-center justify-center pr-1 text-xs font-bold text-[#222]">0.0</div>
          <div className="w-5 shrink-0 bg-[#f1f1f1]" />
          <Ruler />
        </div>
        <div className="flex min-h-0 flex-1 bg-[#fdfdfd]">
          <div className="w-[180px] shrink-0 border-r border-[#ddd] bg-[#fafafa]" />
          <svg className="h-full w-5 shrink-0" aria-hidden="true">
            <defs>
              <pattern id="hatch" width="8" height="8" patternUnits="userSpaceOnUse">
                <path d="M-2 2 2-2M0 8 8 0M6 10l4-4" stroke="#ececec" strokeWidth="2.500" />
              </pattern>
            </defs>
            <rect width="100%" height="100%" fill="url(#hatch)" />
          </svg>
          <div className="flex flex-1 items-center border-l border-[#444] pt-1 pl-[18px]">
            <p className="text-[21px] leading-7 font-bold text-[#e4e4e4]">Create actions in canvas to generate animation</p>
          </div>
        </div>
      </div>
    </section>
  );
}

export default function App() {
  return (
    <div className="flex h-screen flex-col overflow-hidden bg-white font-['Liberation_Sans',Arial,sans-serif]">
      <header className="flex h-[19px] shrink-0 items-center text-[#8f8f8f]">
        <svg viewBox="0 0 8 14" className="h-[14px] w-2 self-start"><path d="M0 0h6v12l-6 2z" fill="#e8761c" /><path d="M0 4h3v5H0z" fill="#fff3e0" /></svg>
        <h1 className="ml-[5px] pb-1 font-['Noto_Sans','Open_Sans',sans-serif] text-[11px] leading-[15px]">Autodesk Fusion 360 (Education License)</h1>
        <div className="mr-5 mb-[7px] ml-auto flex items-center gap-[35px]">
          <button aria-label="Minimize"><svg viewBox="0 0 10 10" className="size-2.5"><path d="M0 5.500h10" stroke="#777" /></svg></button>
          <button aria-label="Restore"><svg viewBox="0 0 10 10" className="size-2.5" fill="none" stroke="#777"><path d="M.5 2.500h7v7h-7zM2.500 2.500v-2h7v7h-2" /></svg></button>
          <button aria-label="Close"><svg viewBox="0 0 10 10" className="size-2.5"><path d="m0 0 10 10M10 0 0 10" stroke="#777" /></svg></button>
        </div>
      </header>
      <div className="flex min-h-0 flex-1">
        <Sidebar />
        <div className="ml-0.5 flex min-w-0 flex-1 flex-col">
          <QuickBar />
          <Ribbon />
          <main className="relative flex min-h-0 flex-1 flex-col justify-between bg-white pt-1 pb-1 pl-1">
            <Model />
            <ViewCube />
            <div className="relative">
              <PanelHeader label="BROWSER" sign="-" arrows />
              <BrowserTree />
            </div>
            <PanelHeader label="COMMENTS" sign="+" />
            <NavBar />
            <ExplodeToolbar />
            <div role="tooltip" className="absolute top-[92px] left-[769px] flex h-[21px] w-[114px] items-center justify-center rounded-[10px] bg-[#4b4b4b] font-['Noto_Sans',sans-serif] text-[11px] leading-4 font-bold text-white">
              Explosion Scale
            </div>
            <Pointer />
          </main>
          <Timeline />
        </div>
      </div>
    </div>
  );
}
